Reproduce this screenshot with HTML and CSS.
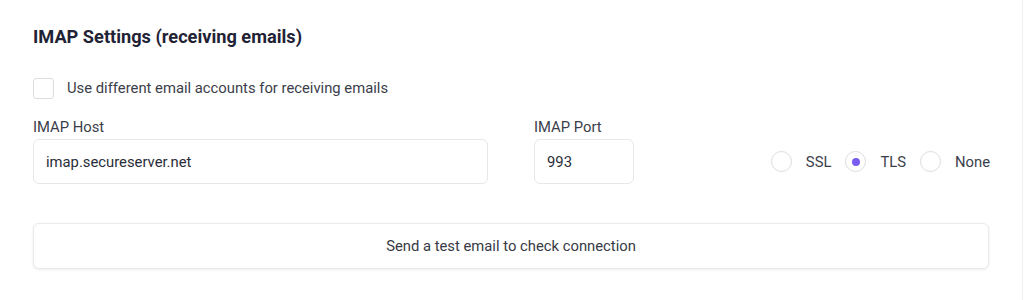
FILE: index.html
```html
<!DOCTYPE html>
<html lang="en">
<head>
    <meta charset="UTF-8">
    <meta name="viewport" content="width=device-width, initial-scale=1.0">
    <title>IMAP Settings</title>
    <link rel="stylesheet" href="styles.css">
</head>
<body>
    <div class="panel">
        <h3 class="section-title">IMAP Settings (receiving emails)</h3>

        <label class="check-row">
            <span class="checkbox"></span>
            <span class="check-label">Use different email accounts for receiving emails</span>
        </label>

        <div class="fields-row">
            <div class="field field-host">
                <div class="field-label">IMAP Host</div>
                <div class="input">imap.secureserver.net</div>
            </div>
            <div class="field field-port">
                <div class="field-label">IMAP Port</div>
                <div class="input">993</div>
            </div>
            <div class="radio-group">
                <label class="radio-item">
                    <span class="radio"></span>
                    <span class="radio-label">SSL</span>
                </label>
                <label class="radio-item">
                    <span class="radio checked"></span>
                    <span class="radio-label">TLS</span>
                </label>
                <label class="radio-item">
                    <span class="radio"></span>
                    <span class="radio-label">None</span>
                </label>
            </div>
        </div>

        <button class="test-btn">Send a test email to check connection</button>
    </div>
</body>
</html>
```

FILE: styles.css
```css
* {
    box-sizing: border-box;
    margin: 0;
    padding: 0;
}

body {
    background-color: #fff;
    color: #373a45;
    font-family: Roboto, 'Liberation Sans', sans-serif;
    font-size: 14px;
    width: 1024px;
    height: 300px;
    overflow: hidden;
}

.panel {
    height: 300px;
    padding: 25px 35px 0 33px;
    border-right: 1px solid #f0f0f2;
    width: 1023px;
}

.section-title {
    font-size: 18.2px;
    font-weight: 700;
    color: #1f2335;
    line-height: 24px;
}

.check-row {
    display: flex;
    align-items: center;
    margin-top: 29px;
    height: 20px;
}

.checkbox {
    width: 21px;
    height: 21px;
    border: 1px solid #dcdde2;
    border-radius: 3px;
    background: #fff;
}

.check-label {
    margin-left: 13px;
    font-size: 14.8px;
    color: #3b3e4a;
}

.fields-row {
    display: flex;
    align-items: flex-end;
    margin-top: 20px;
}

.field-label {
    font-size: 14.8px;
    line-height: 18px;
    color: #3b3e4a;
    margin-bottom: 3px;
}

.input {
    height: 45px;
    border: 1px solid #e6e7eb;
    border-radius: 6px;
    padding: 0 12px;
    display: flex;
    align-items: center;
    font-size: 14.8px;
    color: #2a2d38;
    background: #fff;
}

.field-host {
    width: 455px;
}

.field-port {
    width: 100px;
    margin-left: 46px;
}

.radio-group {
    display: flex;
    align-items: center;
    height: 45px;
    margin-left: auto;
    margin-right: -3px;
    gap: 14px;
}

.radio-item {
    display: flex;
    align-items: center;
}

.radio {
    width: 21px;
    height: 21px;
    border: 1px solid #dcdde2;
    border-radius: 50%;
    display: flex;
    align-items: center;
    justify-content: center;
}

.radio.checked:after {
    content: '';
    width: 8px;
    height: 8px;
    border-radius: 50%;
    background-color: #7a5cf0;
}

.radio-label {
    margin-left: 14px;
    font-size: 14.8px;
    color: #3b3e4a;
}

.test-btn {
    display: block;
    width: 956px;
    height: 46px;
    margin-top: 39px;
    background: #fff;
    border: 1px solid #e9eaee;
    border-radius: 6px;
    box-shadow: 0 1px 3px rgba(0, 0, 0, 0.08);
    font-family: Roboto, 'Liberation Sans', sans-serif;
    font-size: 14.8px;
    color: #373a45;
    cursor: pointer;
}
```
